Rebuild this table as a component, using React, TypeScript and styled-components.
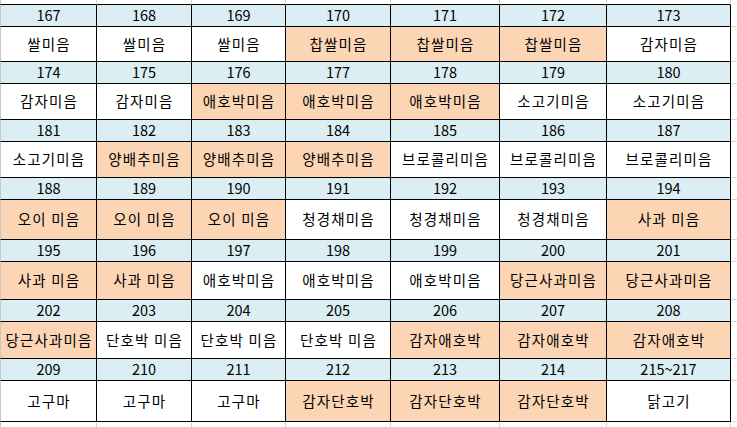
import React from 'react';
import styled, { createGlobalStyle } from 'styled-components';

type Tone = 'white' | 'orange';

interface Food {
  no: string;
  name: string;
  tone: Tone;
}

const W: Tone = 'white';
const O: Tone = 'orange';

const f = (no: string, name: string, tone: Tone): Food => ({ no, name, tone });

const weeks: Food[][] = [
  [f('167', '쌀미음', W), f('168', '쌀미음', W), f('169', '쌀미음', W), f('170', '찹쌀미음', O), f('171', '찹쌀미음', O), f('172', '찹쌀미음', O), f('173', '감자미음', W)],
  [f('174', '감자미음', W), f('175', '감자미음', W), f('176', '애호박미음', O), f('177', '애호박미음', O), f('178', '애호박미음', O), f('179', '소고기미음', W), f('180', '소고기미음', W)],
  [f('181', '소고기미음', W), f('182', '양배추미음', O), f('183', '양배추미음', O), f('184', '양배추미음', O), f('185', '브로콜리미음', W), f('186', '브로콜리미음', W), f('187', '브로콜리미음', W)],
  [f('188', '오이 미음', O), f('189', '오이 미음', O), f('190', '오이 미음', O), f('191', '청경채미음', W), f('192', '청경채미음', W), f('193', '청경채미음', W), f('194', '사과 미음', O)],
  [f('195', '사과 미음', O), f('196', '사과 미음', O), f('197', '애호박미음', W), f('198', '애호박미음', W), f('199', '애호박미음', W), f('200', '당근사과미음', O), f('201', '당근사과미음', O)],
  [f('202', '당근사과미음', O), f('203', '단호박 미음', W), f('204', '단호박 미음', W), f('205', '단호박 미음', W), f('206', '감자애호박', O), f('207', '감자애호박', O), f('208', '감자애호박', O)],
  [f('209', '고구마', W), f('210', '고구마', W), f('211', '고구마', W), f('212', '감자단호박', O), f('213', '감자단호박', O), f('214', '감자단호박', O), f('215~217', '닭고기', W)],
];

// heights of the name rows, the number rows are all 22px
const nameHeights = [35, 36, 36, 40, 38, 37, 41];
const rowTemplate = `5px ${nameHeights.map(h => `22px ${h}px`).join(' ')} 1fr`;

const GlobalStyle = createGlobalStyle`
  html, body {
    margin: 0;
    padding: 0;
    background: #ffffff;
  }
  body {
    font-family: "Noto Sans CJK KR", "Noto Sans", sans-serif;
  }
`;

const Sheet = styled.div`
  display: grid;
  grid-template-columns: 97px 95px 94px 105px 109px 107px 124px 6px;
  grid-template-rows: ${rowTemplate};
  width: 737px;
  height: 427px;
  overflow: hidden;
  background: #ffffff;
`;

const Gap = styled.div<{ $first?: boolean; $closed?: boolean }>`
  border-right: 1px solid #d4d4d4;
  border-bottom: ${p => (p.$closed ? '1px solid #000000' : 'none')};
  border-left: ${p => (p.$first ? '1px solid #c8c8c8' : 'none')};
`;

const Margin = styled.div`
  border-bottom: 1px solid #d4d4d4;
`;

const Cell = styled.div<{ $bg: string; $first?: boolean }>`
  display: flex;
  align-items: center;
  justify-content: center;
  background: ${p => p.$bg};
  border-right: 1px solid #000000;
  border-bottom: 1px solid #000000;
  border-left: ${p => (p.$first ? '1px solid #c8c8c8' : 'none')};
  color: #000000;
  font-size: 14.5px;
  line-height: 1;
  white-space: nowrap;
  overflow: hidden;
`;

const NameCell = styled(Cell)`
  letter-spacing: 1.2px;
  padding-left: 1px;
`;

const tones: Record<Tone, string> = {
  white: '#ffffff',
  orange: '#fcd5b4',
};

export default function App() {
  return (
    <>
      <GlobalStyle />
      <Sheet>
        {weeks[0].map((_, i) => (
          <Gap key={`top${i}`} $first={i === 0} $closed />
        ))}
        <div />
        {weeks.map((week, r) => (
          <React.Fragment key={r}>
            {week.map((food, i) => (
              <Cell key={`n${food.no}`} $bg="#daeef3" $first={i === 0}>
                {food.no}
              </Cell>
            ))}
            <Margin />
            {week.map((food, i) => (
              <NameCell key={`m${food.no}`} $bg={tones[food.tone]} $first={i === 0}>
                {food.name}
              </NameCell>
            ))}
            <Margin />
          </React.Fragment>
        ))}
        {weeks[0].map((_, i) => (
          <Gap key={`bottom${i}`} $first={i === 0} />
        ))}
        <div />
      </Sheet>
    </>
  );
}
